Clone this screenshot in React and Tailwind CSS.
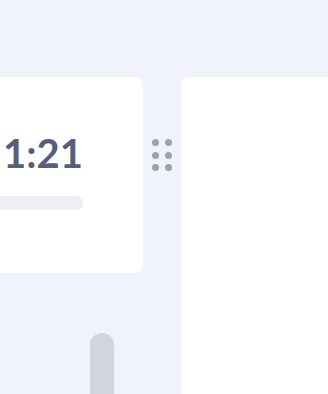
import React from "react";

export default function App() {
  return (
    <div
      className="h-screen w-full overflow-hidden bg-[#f0f3fc] pt-[77px]"
      style={{ fontFamily: "Lato, 'Liberation Sans', sans-serif" }}
    >
      <div className="flex items-start">
        {/* timer column */}
        <div className="flex flex-col -ml-[57px] w-[200px] shrink-0">
          <div className="flex h-[196px] flex-col items-end rounded-lg bg-white pr-[60px] pt-[56px]">
            <span className="text-[40px] font-bold leading-none text-[#565e7b]">1:21</span>
            <div className="mt-[23px] h-[14px] w-[140px] rounded-full bg-[#eeeff2]" />
          </div>
          <div className="ml-[147px] mt-[60px] h-[61px] w-[24px] rounded-t-full bg-[#d1d5de]" />
        </div>

        {/* drag handle */}
        <div className="flex w-[38px] shrink-0 justify-center pt-[62px]">
          <div className="grid grid-cols-2 gap-x-[6px] gap-y-[5.5px]">
            <span className="h-[7px] w-[7px] rounded-full bg-[#9ba2b6]" />
            <span className="h-[7px] w-[7px] rounded-full bg-[#9ba2b6]" />
            <span className="h-[7px] w-[7px] rounded-full bg-[#9ba2b6]" />
            <span className="h-[7px] w-[7px] rounded-full bg-[#9ba2b6]" />
            <span className="h-[7px] w-[7px] rounded-full bg-[#9ba2b6]" />
            <span className="h-[7px] w-[7px] rounded-full bg-[#9ba2b6]" />
          </div>
        </div>

        {/* next panel */}
        <div className="h-[317px] flex-1 rounded-tl-lg bg-white" />
      </div>
    </div>
  );
}
